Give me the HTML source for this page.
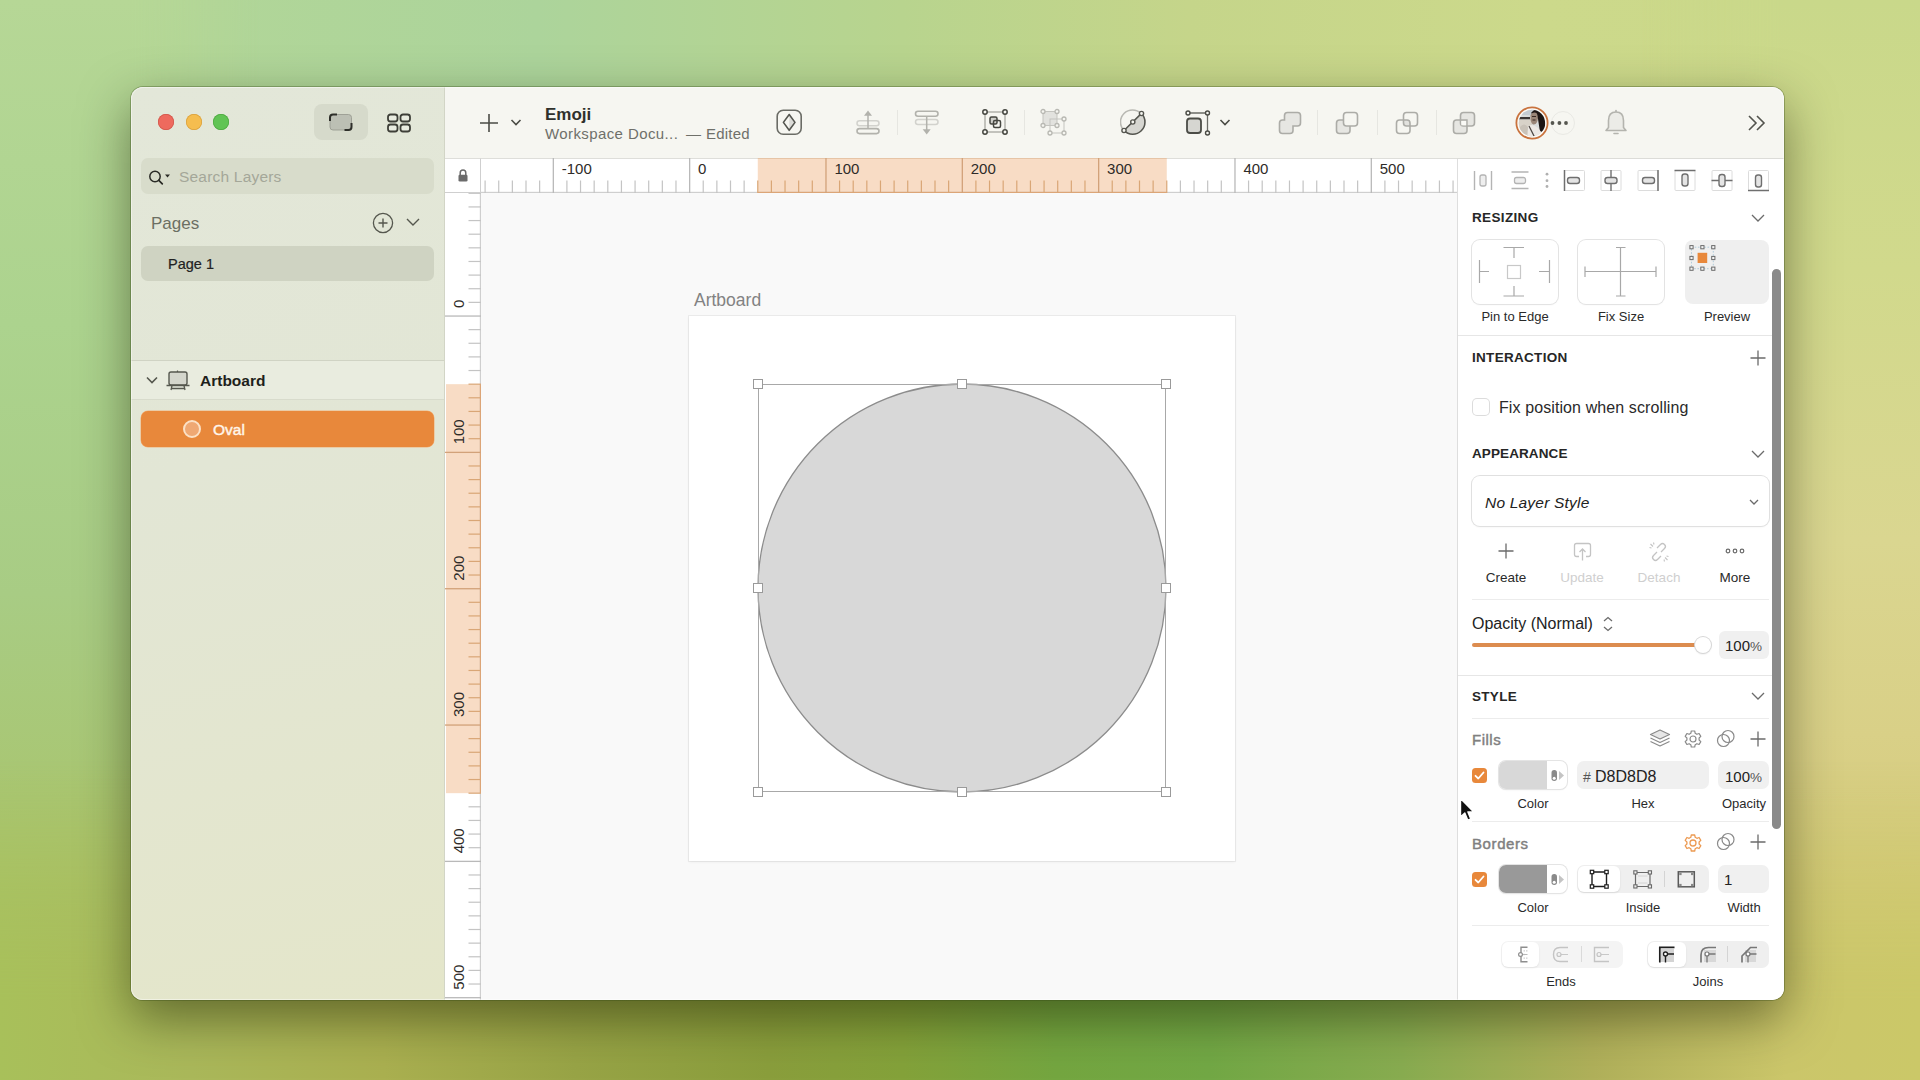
<!DOCTYPE html>
<html><head><meta charset="utf-8">
<style>
*{box-sizing:border-box;margin:0;padding:0}
html,body{width:1920px;height:1080px;overflow:hidden}
body{position:relative;font-family:"Liberation Sans",sans-serif;background:linear-gradient(90deg,#b4d796 0%,#acd49b 28%,#b8d48e 47%,#c5d58a 62%,#ccd98b 80%,#cbd889 100%)}
.bgl{position:absolute;left:0;top:0;width:260px;height:1080px;background:linear-gradient(180deg,#b6d796 0%,#acd38e 30%,#a8cc84 55%,#a9c46c 80%,#a8bd58 100%);-webkit-mask-image:linear-gradient(90deg,#000 0%,#000 50%,transparent 100%)}
.bgr{position:absolute;left:1640px;top:0;width:280px;height:1080px;background:linear-gradient(180deg,#c9d88a 0%,#d1d98c 25%,#dad690 50%,#d9d087 68%,#d5ca7c 82%,#c9c46a 100%);-webkit-mask-image:linear-gradient(90deg,transparent 0%,#000 50%,#000 100%)}
.bgb{position:absolute;left:0;top:760px;width:1920px;height:320px;background:linear-gradient(90deg,#a8c05a 0%,#aab85a 10%,#aab050 20%,#98a446 30%,#8a9e3c 40%,#84a23a 47%,#74a640 55%,#72a845 63%,#88ac50 73%,#b0b05a 83%,#cbc66a 93%,#cbc868 100%);-webkit-mask-image:linear-gradient(180deg,transparent 0%,#000 75%,#000 100%)}
.a{position:absolute}
.win{position:absolute;left:131px;top:87px;width:1653px;height:913px;border-radius:12px;overflow:hidden;
 box-shadow:0 0 0 1px rgba(50,70,20,0.32), 0 18px 50px rgba(25,30,0,0.5);background:#f9f9f9}
.pg{position:absolute;left:-131px;top:-87px;width:1920px;height:1080px}
.t{position:absolute;white-space:nowrap;line-height:1}
</style></head>
<body>
<div class="bgl"></div><div class="bgr"></div><div class="bgb"></div>
<div class="win"><div class="pg">
 <!-- sidebar -->
 <div class="a" style="left:131px;top:87px;width:314px;height:913px;background:linear-gradient(165deg,#e3e7d9 0%,#e2e6d5 40%,#e4e6ca 100%)"></div>
 <div class="a" style="left:444px;top:87px;width:1px;height:913px;background:#d2d5c6"></div>

 <!-- traffic lights -->
 <div class="a" style="left:158px;top:114px;width:16px;height:16px;border-radius:50%;background:#ee6a5e;box-shadow:inset 0 0 0 0.7px #d0564a"></div>
 <div class="a" style="left:186px;top:114px;width:16px;height:16px;border-radius:50%;background:#f5bd4f;box-shadow:inset 0 0 0 0.7px #d9a03c"></div>
 <div class="a" style="left:213px;top:114px;width:16px;height:16px;border-radius:50%;background:#61c454;box-shadow:inset 0 0 0 0.7px #4ea840"></div>
 <!-- view toggle -->
 <div class="a" style="left:314px;top:104px;width:54px;height:36px;border-radius:8px;background:#d6dacb"></div>
 <svg class="a" style="left:326px;top:111px" width="30" height="22" viewBox="0 0 30 22">
  <rect x="4" y="3.5" width="21.5" height="15.5" rx="3" fill="#bcbfb4" stroke="#9a9c92" stroke-width="0.9"/>
  <path d="M4 10 V6.5 Q4 3.5 7 3.5 H11" fill="none" stroke="#2e2f2a" stroke-width="2"/>
  <path d="M25.5 12 V16 Q25.5 19 22.5 19 H18.5" fill="none" stroke="#2e2f2a" stroke-width="2"/>
 </svg>
 <svg class="a" style="left:386px;top:112px" width="26" height="22" viewBox="0 0 26 22">
  <rect x="2" y="2.5" width="9.5" height="7" rx="2.5" fill="#e9ece0" stroke="#3e3f38" stroke-width="1.8"/>
  <rect x="14.5" y="2.5" width="9.5" height="7" rx="2.5" fill="#e9ece0" stroke="#3e3f38" stroke-width="1.8"/>
  <rect x="2" y="12.5" width="9.5" height="7" rx="2.5" fill="#e9ece0" stroke="#3e3f38" stroke-width="1.8"/>
  <rect x="14.5" y="12.5" width="9.5" height="7" rx="2.5" fill="#e9ece0" stroke="#3e3f38" stroke-width="1.8"/>
 </svg>
 <!-- search -->
 <div class="a" style="left:141px;top:158px;width:293px;height:36px;border-radius:7px;background:#d8dccb"></div>
 <svg class="a" style="left:146px;top:167px" width="28" height="20" viewBox="0 0 28 20">
  <circle cx="9" cy="9.5" r="5.2" fill="none" stroke="#2a2b26" stroke-width="1.5"/>
  <path d="M12.8 13.3 L16.3 16.8" stroke="#2a2b26" stroke-width="1.7" stroke-linecap="round"/>
  <path d="M19 7.5 L24 7.5 L21.5 10.5 Z" fill="#2a2b26"/>
 </svg>
 <div class="t" style="left:179px;top:169px;font-size:15.5px;color:#a4a799;letter-spacing:0.2px">Search Layers</div>
 <!-- pages -->
 <div class="t" style="left:151px;top:215px;font-size:17px;color:#6c6f63">Pages</div>
 <svg class="a" style="left:372px;top:212px" width="22" height="22" viewBox="0 0 22 22">
  <circle cx="11" cy="11" r="9.6" fill="none" stroke="#55574e" stroke-width="1.3"/>
  <path d="M11 6.5 V15.5 M6.5 11 H15.5" stroke="#55574e" stroke-width="1.4"/>
 </svg>
 <svg class="a" style="left:405px;top:216px" width="16" height="12" viewBox="0 0 16 12">
  <path d="M2 3 L8 9 L14 3" fill="none" stroke="#55574e" stroke-width="1.4"/>
 </svg>
 <div class="a" style="left:141px;top:246px;width:293px;height:35px;border-radius:7px;background:#cfd3c2"></div>
 <div class="t" style="left:168px;top:257px;font-size:14.5px;color:#222;font-weight:500;-webkit-text-stroke:0.2px #222">Page 1</div>
 <!-- layers -->
 <div class="a" style="left:131px;top:360px;width:313px;height:1px;background:#d0d3c4"></div>
 <div class="a" style="left:131px;top:361px;width:313px;height:38px;background:#e9ecdf"></div>
 <div class="a" style="left:131px;top:399px;width:313px;height:1px;background:#d8dbcc"></div>
 <svg class="a" style="left:144px;top:374px" width="16" height="12" viewBox="0 0 16 12">
  <path d="M3 3.5 L8 8.5 L13 3.5" fill="none" stroke="#55574e" stroke-width="1.6"/>
 </svg>
 <svg class="a" style="left:165px;top:368px" width="26" height="24" viewBox="0 0 26 24">
  <path d="M12.5 2.5 V4" stroke="#56584f" stroke-width="1.2"/>
  <rect x="4" y="4" width="18" height="13" rx="2" fill="#d4d6cc" stroke="#56584f" stroke-width="1.4"/>
  <path d="M1.5 17.5 H24.5" stroke="#56584f" stroke-width="1.5"/>
  <path d="M7 17.5 L6 22 M19 17.5 L20 22 M6.5 20.5 H19.5" stroke="#56584f" stroke-width="1.3"/>
 </svg>
 <div class="t" style="left:200px;top:373px;font-size:15.5px;font-weight:bold;color:#1e1f1b">Artboard</div>
 <div class="a" style="left:141px;top:411px;width:293px;height:36px;border-radius:7px;background:#e8883b;box-shadow:0 0 0 0.5px #f2b27a"></div>
 <div class="a" style="left:183px;top:420px;width:18px;height:18px;border-radius:50%;background:#efa873;border:2px solid #fbe1c6"></div>
 <div class="t" style="left:213px;top:422px;font-size:15.5px;color:#fff5ea;-webkit-text-stroke:0.45px #fff5ea">Oval</div>
 <!-- toolbar -->
 <div class="a" style="left:445px;top:87px;width:1339px;height:71px;background:#f6f6f1"></div>
 <div class="a" style="left:445px;top:158px;width:1339px;height:1px;background:#dcdcd8"></div>

 <!-- toolbar content -->
 <svg class="a" style="left:478px;top:112px" width="22" height="22" viewBox="0 0 22 22">
  <path d="M11 2 V20 M2 11 H20" stroke="#4b4c46" stroke-width="1.6"/>
 </svg>
 <svg class="a" style="left:509px;top:117px" width="14" height="10" viewBox="0 0 14 10">
  <path d="M2.5 3 L7 7.5 L11.5 3" fill="none" stroke="#4b4c46" stroke-width="1.6"/>
 </svg>
 <div class="t" style="left:545px;top:106px;font-size:17px;font-weight:bold;color:#2f302c">Emoji</div>
 <div class="t" style="left:545px;top:126px;font-size:15px;color:#6f706a;letter-spacing:0.4px">Workspace Docu...</div>
 <div class="t" style="left:686px;top:126px;font-size:15px;color:#6f706a">—</div>
 <div class="t" style="left:706px;top:126px;font-size:15px;color:#6f706a;letter-spacing:0.2px">Edited</div>
 <!-- symbol icon -->
 <svg class="a" style="left:770px;top:104px" width="40" height="36" viewBox="770 104 40 36">
  <rect x="777.2" y="110.2" width="24" height="24" rx="6" fill="none" stroke="#6b6c66" stroke-width="1.6"/>
  <path d="M789.2 114.5 L795 122.4 L789.2 130.3 Z" fill="#dcdcd8"/>
  <path d="M789.2 114.5 L795 122.4 L789.2 130.3 L783.4 122.4 Z" fill="none" stroke="#555650" stroke-width="1.6" stroke-linejoin="round"/>
 </svg>
 <!-- forward -->
 <svg class="a" style="left:850px;top:104px" width="36" height="36" viewBox="850 104 36 36">
  <rect x="857" y="120.8" width="22" height="5" rx="2.5" fill="none" stroke="#d2d2cd" stroke-width="1.5"/>
  <rect x="857" y="128.6" width="22" height="5" rx="2.5" fill="none" stroke="#b2b2ac" stroke-width="1.6"/>
  <path d="M868 115 V128.5" stroke="#b2b2ac" stroke-width="1.5"/>
  <path d="M864 115.8 L868 110.5 L872 115.8 Z" fill="#b2b2ac"/>
 </svg>
 <div class="a" style="left:897px;top:110px;width:1px;height:25px;background:#e6e6e1"></div>
 <!-- backward -->
 <svg class="a" style="left:908px;top:104px" width="36" height="36" viewBox="908 104 36 36">
  <rect x="915.5" y="111.3" width="22.5" height="5" rx="2.5" fill="none" stroke="#b2b2ac" stroke-width="1.6"/>
  <rect x="915.5" y="119.6" width="22.5" height="5" rx="2.5" fill="none" stroke="#d2d2cd" stroke-width="1.5"/>
  <path d="M926.7 116.5 V130" stroke="#b2b2ac" stroke-width="1.5"/>
  <path d="M922.7 129.2 L926.7 134.6 L930.7 129.2 Z" fill="#b2b2ac"/>
 </svg>
 <!-- group -->
 <svg class="a" style="left:980px;top:107px" width="30" height="30" viewBox="0 0 30 30">
  <rect x="5" y="5" width="20" height="20" fill="none" stroke="#8e8e88" stroke-width="1"/>
  <circle cx="5" cy="5" r="2.2" fill="#f6f6f1" stroke="#454640" stroke-width="1.5"/>
  <circle cx="25" cy="5" r="2.2" fill="#f6f6f1" stroke="#454640" stroke-width="1.5"/>
  <circle cx="5" cy="25" r="2.2" fill="#f6f6f1" stroke="#454640" stroke-width="1.5"/>
  <circle cx="25" cy="25" r="2.2" fill="#f6f6f1" stroke="#454640" stroke-width="1.5"/>
  <rect x="10" y="10" width="7" height="7" rx="1.5" fill="#cfcfca" stroke="#454640" stroke-width="1.5"/>
  <rect x="13.5" y="13.5" width="7" height="7" rx="1.5" fill="none" stroke="#454640" stroke-width="1.5"/>
 </svg>
 <div class="a" style="left:1024px;top:110px;width:1px;height:25px;background:#e6e6e1"></div>
 <!-- ungroup -->
 <svg class="a" style="left:1039px;top:108px" width="30" height="30" viewBox="0 0 30 30">
  <rect x="4" y="3.5" width="14" height="14" fill="#e2e2de" stroke="#c4c4bf" stroke-width="1"/>
  <rect x="11" y="11" width="14" height="14" fill="none" stroke="#c4c4bf" stroke-width="1"/>
  <g fill="#f6f6f1" stroke="#b8b8b2" stroke-width="1.3">
  <circle cx="4" cy="3.5" r="2"/><circle cx="18" cy="3.5" r="2"/><circle cx="4" cy="17.5" r="2"/><circle cx="18" cy="17.5" r="2"/>
  <circle cx="25" cy="11" r="2"/><circle cx="11" cy="25" r="2"/><circle cx="25" cy="25" r="2"/>
  </g>
 </svg>
 <!-- edit path -->
 <svg class="a" style="left:1120px;top:109px" width="28" height="28" viewBox="0 0 28 28">
  <path d="M4 21.5 A11.5 11.5 0 0 1 21 4.5" fill="none" stroke="#b9b9b3" stroke-width="1.6"/>
  <path d="M4 21.5 L21.5 4.5 A11.5 11.5 0 0 1 4 21.5 Z" fill="#d6d6d1" stroke="#555650" stroke-width="1.6"/>
  <circle cx="4" cy="21.5" r="2.1" fill="#f6f6f1" stroke="#555650" stroke-width="1.4"/>
  <circle cx="12.8" cy="13" r="2.1" fill="#f6f6f1" stroke="#555650" stroke-width="1.4"/>
  <circle cx="21.5" cy="4.5" r="2.1" fill="#f6f6f1" stroke="#555650" stroke-width="1.4"/>
 </svg>
 <!-- scale -->
 <svg class="a" style="left:1184px;top:109px" width="30" height="30" viewBox="0 0 30 30">
  <path d="M4 4 H23.5 V24" fill="none" stroke="#6b6c66" stroke-width="1.3"/>
  <rect x="3" y="9.5" width="14" height="14.5" rx="3" fill="#d6d6d1" stroke="#4b4c46" stroke-width="1.8"/>
  <circle cx="4" cy="4" r="2" fill="#f6f6f1" stroke="#4b4c46" stroke-width="1.4"/>
  <circle cx="23.5" cy="4" r="2" fill="#f6f6f1" stroke="#4b4c46" stroke-width="1.4"/>
  <circle cx="23.5" cy="24" r="2" fill="#f6f6f1" stroke="#4b4c46" stroke-width="1.4"/>
 </svg>
 <svg class="a" style="left:1218px;top:117px" width="14" height="10" viewBox="0 0 14 10">
  <path d="M2.5 3 L7 7.5 L11.5 3" fill="none" stroke="#4b4c46" stroke-width="1.6"/>
 </svg>
 <!-- booleans -->
 <svg class="a" style="left:1276px;top:109px" width="28" height="28" viewBox="0 0 28 28">
  <path d="M11.5 3.5 H21.5 Q24.5 3.5 24.5 6.5 V14 Q24.5 17 21.5 17 H17 V21.5 Q17 24.5 14 24.5 H6.5 Q3.5 24.5 3.5 21.5 V14 Q3.5 11 6.5 11 H8.5 V6.5 Q8.5 3.5 11.5 3.5 Z" fill="#e6e6e2" stroke="#acaca7" stroke-width="1.6"/>
 </svg>
 <div class="a" style="left:1317px;top:110px;width:1px;height:25px;background:#e6e6e1"></div>
 <svg class="a" style="left:1333px;top:109px" width="28" height="28" viewBox="0 0 28 28">
  <rect x="3.5" y="11" width="13.5" height="13.5" rx="3" fill="#e6e6e2" stroke="#acaca7" stroke-width="1.6"/>
  <rect x="10.5" y="3.5" width="14" height="13.5" rx="3" fill="#f6f6f1" stroke="#acaca7" stroke-width="1.6"/>
 </svg>
 <div class="a" style="left:1377px;top:110px;width:1px;height:25px;background:#e6e6e1"></div>
 <svg class="a" style="left:1393px;top:109px" width="28" height="28" viewBox="0 0 28 28">
  <rect x="10.5" y="11" width="6.5" height="6" fill="#e2e2de"/>
  <rect x="3.5" y="11" width="13.5" height="13.5" rx="3" fill="none" stroke="#acaca7" stroke-width="1.6"/>
  <rect x="10.5" y="3.5" width="14" height="13.5" rx="3" fill="none" stroke="#acaca7" stroke-width="1.6"/>
 </svg>
 <div class="a" style="left:1436px;top:110px;width:1px;height:25px;background:#e6e6e1"></div>
 <svg class="a" style="left:1450px;top:109px" width="28" height="28" viewBox="0 0 28 28">
  <rect x="3.5" y="11" width="13.5" height="13.5" rx="3" fill="#e6e6e2" stroke="#acaca7" stroke-width="1.6"/>
  <rect x="10.5" y="3.5" width="14" height="13.5" rx="3" fill="#e6e6e2" stroke="#acaca7" stroke-width="1.6"/>
  <rect x="11.3" y="11.8" width="5" height="4.5" fill="#fafaf6"/>
  <path d="M10.5 11 H17 V17" fill="none" stroke="#acaca7" stroke-width="1.4"/>
 </svg>
 <!-- avatar -->
 <div class="a" style="left:1551px;top:111px;width:24px;height:24px;border-radius:50%;border:1px solid #e9e9e4"></div>
 <svg class="a" style="left:1514px;top:105px" width="36" height="36" viewBox="0 0 36 36">
  <defs><clipPath id="av"><circle cx="18" cy="18" r="13.2"/></clipPath></defs>
  <circle cx="18" cy="18" r="14.8" fill="#fbfaf6"/>
  <g clip-path="url(#av)">
   <rect x="0" y="0" width="36" height="36" fill="#d9dcdc"/>
   <rect x="0" y="3" width="20" height="7" fill="#c4ccd2"/>
   <rect x="0" y="12" width="16" height="2.5" fill="#3a3634"/>
   <rect x="0" y="14.5" width="18" height="22" fill="#d8d2c8"/>
   <path d="M17 8 Q20 3.5 25 5 Q31 8 31 16 L32 26 L26 27 L24 14 Z" fill="#1c1514"/>
   <path d="M16.5 10 Q19 6.5 22.5 8 Q24.5 11 23.5 16 Q22 20 19 19.5 Q16 18 16.5 10 Z" fill="#9a8678"/>
   <path d="M18 11.5 H22 M18.5 15 H21.5" stroke="#3a2a24" stroke-width="1"/>
   <path d="M8 36 Q9 22 17 20 Q26 20 31 36 Z" fill="#ece8e4"/>
   <path d="M6 22 Q10 17 14 22 L13 36 L4 36 Z" fill="#c9c2b8"/>
   <path d="M15 21 L21 33" stroke="#4a4440" stroke-width="1.2"/>
  </g>
  <circle cx="18" cy="18" r="15.6" fill="none" stroke="#c9733e" stroke-width="1.8"/>
 </svg>
 <svg class="a" style="left:1548px;top:119px" width="24" height="8" viewBox="0 0 24 8">
  <circle cx="4.5" cy="4" r="1.9" fill="#55564f"/><circle cx="11.4" cy="4" r="1.9" fill="#55564f"/><circle cx="18" cy="4" r="1.9" fill="#55564f"/>
 </svg>
 <!-- bell -->
 <svg class="a" style="left:1603px;top:108px" width="26" height="28" viewBox="0 0 26 28">
  <path d="M13 2.5 V4" stroke="#b4b4ae" stroke-width="1.6" stroke-linecap="round"/>
  <path d="M5.5 19.5 V12.5 Q5.5 4 13 4 Q20.5 4 20.5 12.5 V19.5 L23 22.5 H3 L5.5 19.5 Z" fill="#ecece7" stroke="#b4b4ae" stroke-width="1.6" stroke-linejoin="round"/>
  <path d="M11 25.5 H15" stroke="#b4b4ae" stroke-width="1.6" stroke-linecap="round"/>
 </svg>
 <!-- >> -->
 <svg class="a" style="left:1746px;top:113px" width="22" height="20" viewBox="0 0 22 20">
  <path d="M3 3 L10 10 L3 17 M11 3 L18 10 L11 17" fill="none" stroke="#52534d" stroke-width="1.6"/>
 </svg>
 <!-- rulers -->
<svg class="a" style="left:481px;top:158px" width="976" height="35" viewBox="0 0 976 35"><rect x="0" y="0" width="976" height="35" fill="#fff"/><rect x="276.77" y="0.5" width="409.00" height="34.5" fill="#f8dcc5"/><rect x="0" y="0" width="976" height="1" fill="#dededa"/><rect x="276.77" y="0" width="409.00" height="1" fill="#e6c4a6"/><rect x="0" y="33.8" width="976" height="1.2" fill="#cfcfcf"/><rect x="276.77" y="33.8" width="409.00" height="1.2" fill="#dca577"/><rect x="3.50" y="22.5" width="1.2" height="12.5" fill="#c4c4c4"/><rect x="17.13" y="22.5" width="1.2" height="12.5" fill="#c4c4c4"/><rect x="30.77" y="22.5" width="1.2" height="12.5" fill="#c4c4c4"/><rect x="44.40" y="22.5" width="1.2" height="12.5" fill="#c4c4c4"/><rect x="58.03" y="22.5" width="1.2" height="12.5" fill="#c4c4c4"/><rect x="71.67" y="0" width="1.3" height="35" fill="#b9b9b9"/><text x="80.77" y="16" font-family="Liberation Sans" font-size="15" fill="#2e2b28">-100</text><rect x="85.30" y="22.5" width="1.2" height="12.5" fill="#c4c4c4"/><rect x="98.93" y="22.5" width="1.2" height="12.5" fill="#c4c4c4"/><rect x="112.57" y="22.5" width="1.2" height="12.5" fill="#c4c4c4"/><rect x="126.20" y="22.5" width="1.2" height="12.5" fill="#c4c4c4"/><rect x="139.83" y="22.5" width="1.2" height="12.5" fill="#c4c4c4"/><rect x="153.47" y="22.5" width="1.2" height="12.5" fill="#c4c4c4"/><rect x="167.10" y="22.5" width="1.2" height="12.5" fill="#c4c4c4"/><rect x="180.73" y="22.5" width="1.2" height="12.5" fill="#c4c4c4"/><rect x="194.37" y="22.5" width="1.2" height="12.5" fill="#c4c4c4"/><rect x="208.00" y="0" width="1.3" height="35" fill="#b9b9b9"/><text x="217.10" y="16" font-family="Liberation Sans" font-size="15" fill="#2e2b28">0</text><rect x="221.63" y="22.5" width="1.2" height="12.5" fill="#c4c4c4"/><rect x="235.27" y="22.5" width="1.2" height="12.5" fill="#c4c4c4"/><rect x="248.90" y="22.5" width="1.2" height="12.5" fill="#c4c4c4"/><rect x="262.53" y="22.5" width="1.2" height="12.5" fill="#c4c4c4"/><rect x="276.17" y="22.5" width="1.2" height="12.5" fill="#d9a676"/><rect x="289.80" y="22.5" width="1.2" height="12.5" fill="#d9a676"/><rect x="303.43" y="22.5" width="1.2" height="12.5" fill="#d9a676"/><rect x="317.07" y="22.5" width="1.2" height="12.5" fill="#d9a676"/><rect x="330.70" y="22.5" width="1.2" height="12.5" fill="#d9a676"/><rect x="344.33" y="0" width="1.3" height="35" fill="#d2a27a"/><text x="353.43" y="16" font-family="Liberation Sans" font-size="15" fill="#2e2b28">100</text><rect x="357.97" y="22.5" width="1.2" height="12.5" fill="#d9a676"/><rect x="371.60" y="22.5" width="1.2" height="12.5" fill="#d9a676"/><rect x="385.23" y="22.5" width="1.2" height="12.5" fill="#d9a676"/><rect x="398.87" y="22.5" width="1.2" height="12.5" fill="#d9a676"/><rect x="412.50" y="22.5" width="1.2" height="12.5" fill="#d9a676"/><rect x="426.13" y="22.5" width="1.2" height="12.5" fill="#d9a676"/><rect x="439.77" y="22.5" width="1.2" height="12.5" fill="#d9a676"/><rect x="453.40" y="22.5" width="1.2" height="12.5" fill="#d9a676"/><rect x="467.03" y="22.5" width="1.2" height="12.5" fill="#d9a676"/><rect x="480.67" y="0" width="1.3" height="35" fill="#d2a27a"/><text x="489.77" y="16" font-family="Liberation Sans" font-size="15" fill="#2e2b28">200</text><rect x="494.30" y="22.5" width="1.2" height="12.5" fill="#d9a676"/><rect x="507.93" y="22.5" width="1.2" height="12.5" fill="#d9a676"/><rect x="521.57" y="22.5" width="1.2" height="12.5" fill="#d9a676"/><rect x="535.20" y="22.5" width="1.2" height="12.5" fill="#d9a676"/><rect x="548.83" y="22.5" width="1.2" height="12.5" fill="#d9a676"/><rect x="562.47" y="22.5" width="1.2" height="12.5" fill="#d9a676"/><rect x="576.10" y="22.5" width="1.2" height="12.5" fill="#d9a676"/><rect x="589.73" y="22.5" width="1.2" height="12.5" fill="#d9a676"/><rect x="603.37" y="22.5" width="1.2" height="12.5" fill="#d9a676"/><rect x="617.00" y="0" width="1.3" height="35" fill="#d2a27a"/><text x="626.10" y="16" font-family="Liberation Sans" font-size="15" fill="#2e2b28">300</text><rect x="630.63" y="22.5" width="1.2" height="12.5" fill="#d9a676"/><rect x="644.27" y="22.5" width="1.2" height="12.5" fill="#d9a676"/><rect x="657.90" y="22.5" width="1.2" height="12.5" fill="#d9a676"/><rect x="671.53" y="22.5" width="1.2" height="12.5" fill="#d9a676"/><rect x="685.17" y="22.5" width="1.2" height="12.5" fill="#d9a676"/><rect x="698.80" y="22.5" width="1.2" height="12.5" fill="#c4c4c4"/><rect x="712.43" y="22.5" width="1.2" height="12.5" fill="#c4c4c4"/><rect x="726.07" y="22.5" width="1.2" height="12.5" fill="#c4c4c4"/><rect x="739.70" y="22.5" width="1.2" height="12.5" fill="#c4c4c4"/><rect x="753.33" y="0" width="1.3" height="35" fill="#b9b9b9"/><text x="762.43" y="16" font-family="Liberation Sans" font-size="15" fill="#2e2b28">400</text><rect x="766.97" y="22.5" width="1.2" height="12.5" fill="#c4c4c4"/><rect x="780.60" y="22.5" width="1.2" height="12.5" fill="#c4c4c4"/><rect x="794.23" y="22.5" width="1.2" height="12.5" fill="#c4c4c4"/><rect x="807.87" y="22.5" width="1.2" height="12.5" fill="#c4c4c4"/><rect x="821.50" y="22.5" width="1.2" height="12.5" fill="#c4c4c4"/><rect x="835.13" y="22.5" width="1.2" height="12.5" fill="#c4c4c4"/><rect x="848.77" y="22.5" width="1.2" height="12.5" fill="#c4c4c4"/><rect x="862.40" y="22.5" width="1.2" height="12.5" fill="#c4c4c4"/><rect x="876.03" y="22.5" width="1.2" height="12.5" fill="#c4c4c4"/><rect x="889.66" y="0" width="1.3" height="35" fill="#b9b9b9"/><text x="898.76" y="16" font-family="Liberation Sans" font-size="15" fill="#2e2b28">500</text><rect x="903.30" y="22.5" width="1.2" height="12.5" fill="#c4c4c4"/><rect x="916.93" y="22.5" width="1.2" height="12.5" fill="#c4c4c4"/><rect x="930.56" y="22.5" width="1.2" height="12.5" fill="#c4c4c4"/><rect x="944.20" y="22.5" width="1.2" height="12.5" fill="#c4c4c4"/><rect x="957.83" y="22.5" width="1.2" height="12.5" fill="#c4c4c4"/><rect x="971.46" y="22.5" width="1.2" height="12.5" fill="#c4c4c4"/></svg>
<svg class="a" style="left:445px;top:192px" width="36" height="808" viewBox="0 0 36 808"><rect x="0" y="0" width="36" height="808" fill="#fff"/><rect x="1" y="192.17" width="35" height="409.00" fill="#f8dcc5"/><rect x="34.8" y="0" width="1.2" height="808" fill="#cfcfcf"/><rect x="34.8" y="192.17" width="1.2" height="409.00" fill="#dca577"/><rect x="23.5" y="0.70" width="12.5" height="1.2" fill="#c4c4c4"/><rect x="23.5" y="14.33" width="12.5" height="1.2" fill="#c4c4c4"/><rect x="23.5" y="27.97" width="12.5" height="1.2" fill="#c4c4c4"/><rect x="23.5" y="41.60" width="12.5" height="1.2" fill="#c4c4c4"/><rect x="23.5" y="55.23" width="12.5" height="1.2" fill="#c4c4c4"/><rect x="23.5" y="68.87" width="12.5" height="1.2" fill="#c4c4c4"/><rect x="23.5" y="82.50" width="12.5" height="1.2" fill="#c4c4c4"/><rect x="23.5" y="96.13" width="12.5" height="1.2" fill="#c4c4c4"/><rect x="23.5" y="109.77" width="12.5" height="1.2" fill="#c4c4c4"/><rect x="0" y="123.40" width="36" height="1.3" fill="#b9b9b9"/><text transform="translate(18.5 116.00) rotate(-90)" x="0" y="0" font-family="Liberation Sans" font-size="15" fill="#2e2b28">0</text><rect x="23.5" y="137.03" width="12.5" height="1.2" fill="#c4c4c4"/><rect x="23.5" y="150.67" width="12.5" height="1.2" fill="#c4c4c4"/><rect x="23.5" y="164.30" width="12.5" height="1.2" fill="#c4c4c4"/><rect x="23.5" y="177.93" width="12.5" height="1.2" fill="#c4c4c4"/><rect x="23.5" y="191.57" width="12.5" height="1.2" fill="#d9a676"/><rect x="23.5" y="205.20" width="12.5" height="1.2" fill="#d9a676"/><rect x="23.5" y="218.83" width="12.5" height="1.2" fill="#d9a676"/><rect x="23.5" y="232.47" width="12.5" height="1.2" fill="#d9a676"/><rect x="23.5" y="246.10" width="12.5" height="1.2" fill="#d9a676"/><rect x="0" y="259.73" width="36" height="1.3" fill="#d2a27a"/><text transform="translate(18.5 252.33) rotate(-90)" x="0" y="0" font-family="Liberation Sans" font-size="15" fill="#2e2b28">100</text><rect x="23.5" y="273.37" width="12.5" height="1.2" fill="#d9a676"/><rect x="23.5" y="287.00" width="12.5" height="1.2" fill="#d9a676"/><rect x="23.5" y="300.63" width="12.5" height="1.2" fill="#d9a676"/><rect x="23.5" y="314.27" width="12.5" height="1.2" fill="#d9a676"/><rect x="23.5" y="327.90" width="12.5" height="1.2" fill="#d9a676"/><rect x="23.5" y="341.53" width="12.5" height="1.2" fill="#d9a676"/><rect x="23.5" y="355.17" width="12.5" height="1.2" fill="#d9a676"/><rect x="23.5" y="368.80" width="12.5" height="1.2" fill="#d9a676"/><rect x="23.5" y="382.43" width="12.5" height="1.2" fill="#d9a676"/><rect x="0" y="396.07" width="36" height="1.3" fill="#d2a27a"/><text transform="translate(18.5 388.67) rotate(-90)" x="0" y="0" font-family="Liberation Sans" font-size="15" fill="#2e2b28">200</text><rect x="23.5" y="409.70" width="12.5" height="1.2" fill="#d9a676"/><rect x="23.5" y="423.33" width="12.5" height="1.2" fill="#d9a676"/><rect x="23.5" y="436.97" width="12.5" height="1.2" fill="#d9a676"/><rect x="23.5" y="450.60" width="12.5" height="1.2" fill="#d9a676"/><rect x="23.5" y="464.23" width="12.5" height="1.2" fill="#d9a676"/><rect x="23.5" y="477.87" width="12.5" height="1.2" fill="#d9a676"/><rect x="23.5" y="491.50" width="12.5" height="1.2" fill="#d9a676"/><rect x="23.5" y="505.13" width="12.5" height="1.2" fill="#d9a676"/><rect x="23.5" y="518.77" width="12.5" height="1.2" fill="#d9a676"/><rect x="0" y="532.40" width="36" height="1.3" fill="#d2a27a"/><text transform="translate(18.5 525.00) rotate(-90)" x="0" y="0" font-family="Liberation Sans" font-size="15" fill="#2e2b28">300</text><rect x="23.5" y="546.03" width="12.5" height="1.2" fill="#d9a676"/><rect x="23.5" y="559.67" width="12.5" height="1.2" fill="#d9a676"/><rect x="23.5" y="573.30" width="12.5" height="1.2" fill="#d9a676"/><rect x="23.5" y="586.93" width="12.5" height="1.2" fill="#d9a676"/><rect x="23.5" y="600.57" width="12.5" height="1.2" fill="#d9a676"/><rect x="23.5" y="614.20" width="12.5" height="1.2" fill="#c4c4c4"/><rect x="23.5" y="627.83" width="12.5" height="1.2" fill="#c4c4c4"/><rect x="23.5" y="641.47" width="12.5" height="1.2" fill="#c4c4c4"/><rect x="23.5" y="655.10" width="12.5" height="1.2" fill="#c4c4c4"/><rect x="0" y="668.73" width="36" height="1.3" fill="#b9b9b9"/><text transform="translate(18.5 661.33) rotate(-90)" x="0" y="0" font-family="Liberation Sans" font-size="15" fill="#2e2b28">400</text><rect x="23.5" y="682.37" width="12.5" height="1.2" fill="#c4c4c4"/><rect x="23.5" y="696.00" width="12.5" height="1.2" fill="#c4c4c4"/><rect x="23.5" y="709.63" width="12.5" height="1.2" fill="#c4c4c4"/><rect x="23.5" y="723.27" width="12.5" height="1.2" fill="#c4c4c4"/><rect x="23.5" y="736.90" width="12.5" height="1.2" fill="#c4c4c4"/><rect x="23.5" y="750.53" width="12.5" height="1.2" fill="#c4c4c4"/><rect x="23.5" y="764.17" width="12.5" height="1.2" fill="#c4c4c4"/><rect x="23.5" y="777.80" width="12.5" height="1.2" fill="#c4c4c4"/><rect x="23.5" y="791.43" width="12.5" height="1.2" fill="#c4c4c4"/><rect x="0" y="805.06" width="36" height="1.3" fill="#b9b9b9"/><text transform="translate(18.5 797.66) rotate(-90)" x="0" y="0" font-family="Liberation Sans" font-size="15" fill="#2e2b28">500</text></svg>
<div class="a" style="left:445px;top:158px;width:36px;height:35px;background:#fff;border-top:1px solid #dededa;border-bottom:1.2px solid #cfcfcf;border-right:1.2px solid #cfcfcf"></div>
<svg class="a" style="left:456px;top:168px" width="14" height="16" viewBox="0 0 14 16"><path d="M4.2 7 V5 Q4.2 2 7 2 Q9.8 2 9.8 5 V7" fill="none" stroke="#6b6b6b" stroke-width="1.5"/><rect x="2.5" y="6.8" width="9" height="6.8" rx="1.3" fill="#6b6b6b"/></svg>
 <!-- canvas -->
 <div class="t" style="left:694px;top:292px;font-size:17.5px;color:#828282">Artboard</div>
 <div class="a" style="left:689px;top:316px;width:546px;height:545px;background:#fff;box-shadow:0 0 0 1px rgba(0,0,0,0.05),0 1px 3px rgba(0,0,0,0.06)"></div>
 <svg class="a" style="left:740px;top:366px" width="444" height="444" viewBox="0 0 444 444">
  <circle cx="222" cy="222" r="204" fill="#d8d8d8" stroke="#8c8c8c" stroke-width="1.3"/>
  <rect x="18.5" y="18.5" width="407" height="407" fill="none" stroke="#a8a8a8" stroke-width="1"/>
  <g fill="#fff" stroke="#9a9a9a" stroke-width="1">
   <rect x="13.5" y="13.5" width="9" height="9"/><rect x="217.5" y="13.5" width="9" height="9"/><rect x="421.5" y="13.5" width="9" height="9"/>
   <rect x="13.5" y="217.5" width="9" height="9"/><rect x="421.5" y="217.5" width="9" height="9"/>
   <rect x="13.5" y="421.5" width="9" height="9"/><rect x="217.5" y="421.5" width="9" height="9"/><rect x="421.5" y="421.5" width="9" height="9"/>
  </g>
 </svg>

 <!-- inspector -->
 <div class="a" style="left:1457px;top:159px;width:327px;height:841px;background:#fff"></div>
 <div class="a" style="left:1457px;top:159px;width:1px;height:841px;background:#dedede"></div>
 <!-- inspector content -->
 <!-- align row -->
 <svg class="a" style="left:1470px;top:166px" width="300" height="30" viewBox="1470 166 300 30">
  <g fill="none" stroke-width="1.4">
   <path d="M1474.5 171 V190 M1491.5 171 V190" stroke="#b4b4b4"/>
   <rect x="1480" y="175" width="6" height="11" rx="2" fill="#eee" stroke="#b4b4b4" stroke-width="1.3"/>
   <path d="M1511.5 172 H1528.5 M1511.5 188.5 H1528.5" stroke="#b4b4b4"/>
   <rect x="1514.5" y="177.5" width="11" height="6" rx="2" fill="#eee" stroke="#b4b4b4" stroke-width="1.3"/>
  </g>
  <g fill="#b0b0b0"><circle cx="1547" cy="174.2" r="1.4"/><circle cx="1547" cy="180.7" r="1.4"/><circle cx="1547" cy="186.5" r="1.4"/></g>
  <g fill="none">
   <rect x="1564.5" y="170.5" width="20" height="20" rx="1" stroke="#dcdcdc" stroke-width="1"/>
   <path d="M1564.5 170 V191" stroke="#6f6f6f" stroke-width="1.5"/>
   <rect x="1567.5" y="177.5" width="12" height="6" rx="2.5" fill="#e4e4e4" stroke="#6f6f6f" stroke-width="1.4"/>
   <rect x="1601" y="170.5" width="20" height="20" rx="1" stroke="#dcdcdc" stroke-width="1"/>
   <path d="M1611 170 V191" stroke="#6f6f6f" stroke-width="1.4"/>
   <rect x="1605" y="177.5" width="12" height="6" rx="2.5" fill="#e4e4e4" stroke="#6f6f6f" stroke-width="1.4"/>
   <rect x="1638" y="170.5" width="20" height="20" rx="1" stroke="#dcdcdc" stroke-width="1"/>
   <path d="M1658 170 V191" stroke="#6f6f6f" stroke-width="1.5"/>
   <rect x="1642.5" y="177.5" width="12" height="6" rx="2.5" fill="#e4e4e4" stroke="#6f6f6f" stroke-width="1.4"/>
   <rect x="1675" y="170.5" width="20" height="20" rx="1" stroke="#dcdcdc" stroke-width="1"/>
   <path d="M1674.5 170.5 H1695.5" stroke="#6f6f6f" stroke-width="1.5"/>
   <rect x="1682" y="174" width="6" height="12" rx="2.5" fill="#e4e4e4" stroke="#6f6f6f" stroke-width="1.4"/>
   <rect x="1712" y="170.5" width="20" height="20" rx="1" stroke="#dcdcdc" stroke-width="1"/>
   <path d="M1711.5 180.5 H1732.5" stroke="#6f6f6f" stroke-width="1.4"/>
   <rect x="1719" y="174.5" width="6" height="12" rx="2.5" fill="#e4e4e4" stroke="#6f6f6f" stroke-width="1.4"/>
   <rect x="1748.5" y="170.5" width="20" height="20" rx="1" stroke="#dcdcdc" stroke-width="1"/>
   <path d="M1748 190.5 H1769" stroke="#6f6f6f" stroke-width="1.5"/>
   <rect x="1755.5" y="175" width="6" height="12" rx="2.5" fill="#e4e4e4" stroke="#6f6f6f" stroke-width="1.4"/>
  </g>
 </svg>
 <!-- RESIZING -->
 <div class="t" style="left:1472px;top:211px;font-size:13.5px;font-weight:bold;color:#262626;letter-spacing:0.35px">RESIZING</div>
 <svg class="a" style="left:1750px;top:212px" width="16" height="12" viewBox="0 0 16 12"><path d="M2 3 L8 9 L14 3" fill="none" stroke="#6b6b6b" stroke-width="1.3"/></svg>
 <div class="a" style="left:1472px;top:240px;width:86px;height:64px;border-radius:8px;background:#fff;box-shadow:0 0 0 1px #e3e3e3,0 1px 2px rgba(0,0,0,0.06)"></div>
 <div class="a" style="left:1578px;top:240px;width:86px;height:64px;border-radius:8px;background:#fff;box-shadow:0 0 0 1px #e3e3e3,0 1px 2px rgba(0,0,0,0.06)"></div>
 <div class="a" style="left:1685px;top:240px;width:84px;height:64px;border-radius:8px;background:#efefef"></div>
 <svg class="a" style="left:1472px;top:240px" width="86" height="64" viewBox="0 0 86 64">
  <g stroke="#a8a8a8" stroke-width="1.2" fill="none">
   <path d="M31.5 7.5 H52 M42 7.5 V18"/>
   <path d="M31.5 56 H52 M42 46 V56"/>
   <path d="M7.5 20 V43 M7.5 31.5 H17"/>
   <path d="M77.5 20 V43 M67 31.5 H77.5"/>
   <rect x="35.5" y="25.5" width="13" height="13" stroke="#c8c8c8"/>
  </g>
 </svg>
 <svg class="a" style="left:1578px;top:240px" width="86" height="64" viewBox="0 0 86 64">
  <g stroke="#a8a8a8" stroke-width="1.2" fill="none">
   <path d="M42.5 7.5 V56 M38 7.5 H47.5 M38 56 H47.5"/>
   <path d="M7 31.5 H78 M7 26.5 V37 M78 26.5 V37"/>
  </g>
 </svg>
 <svg class="a" style="left:1685px;top:240px" width="40" height="36" viewBox="0 0 40 36">
  <path d="M6.5 7.2 H28.3 V28.7 H6.5 Z" fill="none" stroke="#9fc3d6" stroke-width="0.8" stroke-dasharray="1.6 1.6"/>
  <rect x="12.6" y="12.8" width="9.6" height="10.2" fill="#e8883b"/>
  <g fill="#f4f4f4" stroke="#6a6a6a" stroke-width="1">
   <rect x="4.9" y="5.6" width="3.2" height="3.2"/><rect x="15.8" y="5.6" width="3.2" height="3.2"/><rect x="26.7" y="5.6" width="3.2" height="3.2"/>
   <rect x="4.9" y="16.4" width="3.2" height="3.2"/><rect x="26.7" y="16.4" width="3.2" height="3.2"/>
   <rect x="4.9" y="27.1" width="3.2" height="3.2"/><rect x="15.8" y="27.1" width="3.2" height="3.2"/><rect x="26.7" y="27.1" width="3.2" height="3.2"/>
  </g>
 </svg>
 <div class="t" style="left:1472px;top:310px;width:86px;text-align:center;font-size:13px;color:#2a2a2a">Pin to Edge</div>
 <div class="t" style="left:1578px;top:310px;width:86px;text-align:center;font-size:13px;color:#2a2a2a">Fix Size</div>
 <div class="t" style="left:1685px;top:310px;width:84px;text-align:center;font-size:13px;color:#2a2a2a">Preview</div>
 <div class="a" style="left:1458px;top:335px;width:314px;height:1px;background:#e6e6e6"></div>
 <!-- INTERACTION -->
 <div class="t" style="left:1472px;top:351px;font-size:13.5px;font-weight:bold;color:#262626;letter-spacing:0.3px">INTERACTION</div>
 <svg class="a" style="left:1749px;top:349px" width="18" height="18" viewBox="0 0 18 18"><path d="M9 1.5 V16.5 M1.5 9 H16.5" stroke="#6b6b6b" stroke-width="1.3"/></svg>
 <div class="a" style="left:1473px;top:399px;width:16px;height:16px;border-radius:4px;background:#fff;box-shadow:0 0 0 1px #dcdcdc"></div>
 <div class="t" style="left:1499px;top:400px;font-size:16px;letter-spacing:0.1px;color:#2a2a2a">Fix position when scrolling</div>
 <!-- APPEARANCE -->
 <div class="t" style="left:1472px;top:447px;font-size:13.5px;font-weight:bold;color:#262626;letter-spacing:0.1px">APPEARANCE</div>
 <svg class="a" style="left:1750px;top:448px" width="16" height="12" viewBox="0 0 16 12"><path d="M2 3 L8 9 L14 3" fill="none" stroke="#6b6b6b" stroke-width="1.3"/></svg>
 <div class="a" style="left:1472px;top:476px;width:297px;height:50px;border-radius:8px;background:#fff;box-shadow:0 0 0 1px #e0e0e0,0 1px 2px rgba(0,0,0,0.08)"></div>
 <div class="t" style="left:1485px;top:495px;font-size:15.5px;font-style:italic;letter-spacing:0.2px;color:#222">No Layer Style</div>
 <svg class="a" style="left:1748px;top:497px" width="12" height="10" viewBox="0 0 12 10"><path d="M2 3 L6 7 L10 3" fill="none" stroke="#6b6b6b" stroke-width="1.3"/></svg>
 <svg class="a" style="left:1496px;top:541px" width="20" height="20" viewBox="0 0 20 20"><path d="M10 2.5 V17.5 M2.5 10 H17.5" stroke="#6b6b6b" stroke-width="1.3"/></svg>
 <svg class="a" style="left:1572px;top:541px" width="22" height="22" viewBox="0 0 22 22">
  <path d="M7 15.5 H4.5 Q2.5 15.5 2.5 13.5 V4.5 Q2.5 2.5 4.5 2.5 H16.5 Q18.5 2.5 18.5 4.5 V13.5 Q18.5 15.5 16.5 15.5 H14" fill="none" stroke="#c4c4c4" stroke-width="1.3"/>
  <path d="M10.5 19.5 V8 M7.5 11 L10.5 8 L13.5 11" fill="none" stroke="#c4c4c4" stroke-width="1.3"/>
 </svg>
 <svg class="a" style="left:1648px;top:541px" width="22" height="22" viewBox="0 0 22 22">
  <path d="M9 7 L12.5 3.5 Q14.5 1.5 16.5 3.5 Q18.5 5.5 16.5 7.5 L13 11" fill="none" stroke="#c4c4c4" stroke-width="1.3"/>
  <path d="M9 11 L5.5 14.5 Q3.5 16.5 5.5 18.5 Q7.5 20.5 9.5 18.5 L13 15" fill="none" stroke="#c4c4c4" stroke-width="1.3"/>
  <path d="M2.5 3 L5 5.5 M5.5 1.5 L6 3.5 M1.5 6.5 L3.5 7 M19.5 19 L17 16.5 M16.5 20.5 L16 18.5 M20.5 15.5 L18.5 15" stroke="#c4c4c4" stroke-width="1.1"/>
 </svg>
 <svg class="a" style="left:1724px;top:545px" width="22" height="12" viewBox="0 0 22 12"><g fill="none" stroke="#6b6b6b" stroke-width="1.2"><circle cx="4" cy="6" r="1.8"/><circle cx="11" cy="6" r="1.8"/><circle cx="18" cy="6" r="1.8"/></g></svg>
 <div class="t" style="left:1466px;top:571px;width:80px;text-align:center;font-size:13.5px;color:#2a2a2a">Create</div>
 <div class="t" style="left:1542px;top:571px;width:80px;text-align:center;font-size:13.5px;color:#cfcfcf">Update</div>
 <div class="t" style="left:1619px;top:571px;width:80px;text-align:center;font-size:13.5px;color:#cfcfcf">Detach</div>
 <div class="t" style="left:1695px;top:571px;width:80px;text-align:center;font-size:13.5px;color:#2a2a2a">More</div>
 <div class="a" style="left:1472px;top:599px;width:297px;height:1px;background:#ececec"></div>
 <!-- opacity -->
 <div class="t" style="left:1472px;top:616px;font-size:16px;color:#222">Opacity (Normal)</div>
 <svg class="a" style="left:1601px;top:615px" width="14" height="18" viewBox="0 0 14 18"><path d="M3 6 L7 2.5 L11 6 M3 12 L7 15.5 L11 12" fill="none" stroke="#6b6b6b" stroke-width="1.3"/></svg>
 <div class="a" style="left:1472px;top:643px;width:234px;height:4px;border-radius:2px;background:#dc8c4f"></div>
 <div class="a" style="left:1695px;top:637px;width:16px;height:16px;border-radius:50%;background:#fff;box-shadow:0 0 0 1px #d6d6d6,0 1px 2px rgba(0,0,0,0.15)"></div>
 <div class="a" style="left:1719px;top:631px;width:50px;height:28px;border-radius:6px;background:#f0f0f0"></div>
 <div class="t" style="left:1725px;top:638px;font-size:15px;color:#222">100<span style="font-size:13.5px;color:#555">%</span></div>
 <div class="a" style="left:1458px;top:675px;width:314px;height:1px;background:#e6e6e6"></div>
 <!-- STYLE -->
 <div class="t" style="left:1472px;top:690px;font-size:13.5px;font-weight:bold;color:#262626;letter-spacing:0.3px">STYLE</div>
 <svg class="a" style="left:1750px;top:690px" width="16" height="12" viewBox="0 0 16 12"><path d="M2 3 L8 9 L14 3" fill="none" stroke="#6b6b6b" stroke-width="1.3"/></svg>
 <div class="a" style="left:1472px;top:718px;width:297px;height:1px;background:#ececec"></div>
 <!-- Fills -->
 <div class="t" style="left:1472px;top:732px;font-size:15px;color:#808080;-webkit-text-stroke:0.45px #808080;letter-spacing:0.5px">Fills</div>
 <svg class="a" style="left:1648px;top:728px" width="24" height="21" viewBox="0 0 24 21">
  <path d="M12 2 L21.5 6.5 L12 11 L2.5 6.5 Z" fill="#e6e6e6" stroke="#8a8a8a" stroke-width="1.2" stroke-linejoin="round"/>
  <path d="M2.5 10 L12 14.5 L21.5 10 M2.5 13.5 L12 18 L21.5 13.5" fill="none" stroke="#8a8a8a" stroke-width="1.2" stroke-linejoin="round"/>
 </svg>
 <svg class="a" style="left:1683px;top:729px" width="20" height="20" viewBox="0 0 20 20">
  <path d="M8.3 2 H11.7 L12.2 4.3 L13.9 5.3 L16.1 4.5 L17.8 7.4 L16.1 9 V11 L17.8 12.6 L16.1 15.5 L13.9 14.7 L12.2 15.7 L11.7 18 H8.3 L7.8 15.7 L6.1 14.7 L3.9 15.5 L2.2 12.6 L3.9 11 V9 L2.2 7.4 L3.9 4.5 L6.1 5.3 L7.8 4.3 Z" fill="none" stroke="#8a8a8a" stroke-width="1.2" stroke-linejoin="round"/>
  <circle cx="10" cy="10" r="3" fill="none" stroke="#8a8a8a" stroke-width="1.2"/>
 </svg>
 <svg class="a" style="left:1716px;top:729px" width="20" height="20" viewBox="0 0 20 20">
  <circle cx="7.5" cy="11.5" r="6" fill="none" stroke="#8a8a8a" stroke-width="1.2"/>
  <circle cx="12" cy="7.5" r="6" fill="none" stroke="#8a8a8a" stroke-width="1.2"/>
 </svg>
 <svg class="a" style="left:1749px;top:730px" width="18" height="18" viewBox="0 0 18 18"><path d="M9 1.5 V16.5 M1.5 9 H16.5" stroke="#6b6b6b" stroke-width="1.3"/></svg>
 <!-- fill row -->
 <div class="a" style="left:1472px;top:768px;width:15px;height:15px;border-radius:3.5px;background:#e8883b"></div>
 <svg class="a" style="left:1472px;top:768px" width="15" height="15" viewBox="0 0 15 15"><path d="M3.5 7.8 L6.3 10.5 L11.5 4.5" fill="none" stroke="#fff" stroke-width="1.8" stroke-linecap="round" stroke-linejoin="round"/></svg>
 <div class="a" style="left:1499px;top:761px;width:68px;height:28px;border-radius:7px;background:#fff;box-shadow:0 0 0 1px #e4e4e4,0 1px 2px rgba(0,0,0,0.08);overflow:hidden">
  <div class="a" style="left:0;top:0;width:48px;height:28px;background:#d8d8d8"></div>
 </div>
 <svg class="a" style="left:1550px;top:768px" width="16" height="15" viewBox="0 0 16 15"><rect x="1.5" y="2" width="5.5" height="11" rx="2.7" fill="#8a8a8a"/><path d="M9 3 L14 7.5 L9 12 Z" fill="#c4c4c4"/><circle cx="4.2" cy="10.3" r="1.5" fill="#fff"/></svg>
 <div class="a" style="left:1577px;top:761px;width:132px;height:28px;border-radius:7px;background:#f0f0f0"></div>
 <div class="t" style="left:1583px;top:770px;font-size:14px;color:#555">#</div>
 <div class="t" style="left:1595px;top:769px;font-size:16px;color:#222">D8D8D8</div>
 <div class="a" style="left:1718px;top:761px;width:51px;height:28px;border-radius:7px;background:#f0f0f0"></div>
 <div class="t" style="left:1725px;top:769px;font-size:15px;color:#222">100<span style="font-size:13.5px;color:#555">%</span></div>
 <div class="t" style="left:1499px;top:797px;width:68px;text-align:center;font-size:13px;color:#2a2a2a">Color</div>
 <div class="t" style="left:1577px;top:797px;width:132px;text-align:center;font-size:13px;color:#2a2a2a">Hex</div>
 <div class="t" style="left:1712px;top:797px;width:64px;text-align:center;font-size:13px;color:#2a2a2a">Opacity</div>
 <div class="a" style="left:1472px;top:821px;width:297px;height:1px;background:#ececec"></div>
 <!-- Borders -->
 <div class="t" style="left:1472px;top:836px;font-size:15px;color:#808080;-webkit-text-stroke:0.45px #808080;letter-spacing:0.6px">Borders</div>
 <svg class="a" style="left:1683px;top:833px" width="20" height="20" viewBox="0 0 20 20">
  <path d="M8.3 2 H11.7 L12.2 4.3 L13.9 5.3 L16.1 4.5 L17.8 7.4 L16.1 9 V11 L17.8 12.6 L16.1 15.5 L13.9 14.7 L12.2 15.7 L11.7 18 H8.3 L7.8 15.7 L6.1 14.7 L3.9 15.5 L2.2 12.6 L3.9 11 V9 L2.2 7.4 L3.9 4.5 L6.1 5.3 L7.8 4.3 Z" fill="none" stroke="#ec9a52" stroke-width="1.3" stroke-linejoin="round"/>
  <circle cx="10" cy="10" r="3" fill="none" stroke="#ec9a52" stroke-width="1.3"/>
 </svg>
 <svg class="a" style="left:1716px;top:832px" width="20" height="20" viewBox="0 0 20 20">
  <circle cx="7.5" cy="11.5" r="6" fill="none" stroke="#8a8a8a" stroke-width="1.2"/>
  <circle cx="12" cy="7.5" r="6" fill="none" stroke="#8a8a8a" stroke-width="1.2"/>
 </svg>
 <svg class="a" style="left:1749px;top:833px" width="18" height="18" viewBox="0 0 18 18"><path d="M9 1.5 V16.5 M1.5 9 H16.5" stroke="#6b6b6b" stroke-width="1.3"/></svg>
 <div class="a" style="left:1472px;top:872px;width:15px;height:15px;border-radius:3.5px;background:#e8883b"></div>
 <svg class="a" style="left:1472px;top:872px" width="15" height="15" viewBox="0 0 15 15"><path d="M3.5 7.8 L6.3 10.5 L11.5 4.5" fill="none" stroke="#fff" stroke-width="1.8" stroke-linecap="round" stroke-linejoin="round"/></svg>
 <div class="a" style="left:1499px;top:865px;width:68px;height:28px;border-radius:7px;background:#fff;box-shadow:0 0 0 1px #e4e4e4,0 1px 2px rgba(0,0,0,0.08);overflow:hidden">
  <div class="a" style="left:0;top:0;width:48px;height:28px;background:#999"></div>
 </div>
 <svg class="a" style="left:1550px;top:872px" width="16" height="15" viewBox="0 0 16 15"><rect x="1.5" y="2" width="5.5" height="11" rx="2.7" fill="#8a8a8a"/><path d="M9 3 L14 7.5 L9 12 Z" fill="#c4c4c4"/><circle cx="4.2" cy="10.3" r="1.5" fill="#fff"/></svg>
 <div class="a" style="left:1577px;top:865px;width:132px;height:28px;border-radius:7px;background:#efefef"></div>
 <div class="a" style="left:1578px;top:866px;width:42px;height:26px;border-radius:6px;background:#fff;box-shadow:0 1px 2px rgba(0,0,0,0.1)"></div>
 <div class="a" style="left:1664px;top:871px;width:1px;height:16px;background:#d4d4d4"></div>
 <svg class="a" style="left:1577px;top:865px" width="132" height="28" viewBox="0 0 132 28">
  <g fill="none">
   <path d="M15 7 H29.5 M15 21.5 H29.5 M15 7 V21.5 M29.5 7 V21.5" stroke="#1e1e1e" stroke-width="1.4"/>
   <g fill="#fff" stroke="#1e1e1e" stroke-width="1.2"><rect x="13.3" y="5.3" width="3.4" height="3.4"/><rect x="27.8" y="5.3" width="3.4" height="3.4"/><rect x="13.3" y="19.8" width="3.4" height="3.4"/><rect x="27.8" y="19.8" width="3.4" height="3.4"/></g>
   <path d="M58.5 7.5 H73 M58.5 21.5 H73 M58.5 7.5 V21.5 M73 7.5 V21.5" stroke="#6a6a6a" stroke-width="1.2"/>
   <path d="M61 11 H70.5 M61 18 H70.5" stroke="#d4d4d4" stroke-width="1"/>
   <g fill="#efefef" stroke="#6a6a6a" stroke-width="1.1"><rect x="56.8" y="5.8" width="3.2" height="3.2"/><rect x="71.3" y="5.8" width="3.2" height="3.2"/><rect x="56.8" y="19.8" width="3.2" height="3.2"/><rect x="71.3" y="19.8" width="3.2" height="3.2"/></g>
   <rect x="101.3" y="6.8" width="16" height="15" stroke="#5a5a5a" stroke-width="1.5"/>
   <g fill="#888"><rect x="102.2" y="7.7" width="2.4" height="2.4"/><rect x="114" y="7.7" width="2.4" height="2.4"/><rect x="102.2" y="18.9" width="2.4" height="2.4"/><rect x="114" y="18.9" width="2.4" height="2.4"/></g>
  </g>
 </svg>
 <div class="a" style="left:1718px;top:865px;width:51px;height:28px;border-radius:7px;background:#f0f0f0"></div>
 <div class="t" style="left:1724px;top:872px;font-size:15px;color:#222">1</div>
 <div class="t" style="left:1499px;top:901px;width:68px;text-align:center;font-size:13px;color:#2a2a2a">Color</div>
 <div class="t" style="left:1577px;top:901px;width:132px;text-align:center;font-size:13px;color:#2a2a2a">Inside</div>
 <div class="t" style="left:1712px;top:901px;width:64px;text-align:center;font-size:13px;color:#2a2a2a">Width</div>
 <div class="a" style="left:1472px;top:925px;width:297px;height:1px;background:#ececec"></div>
 <!-- ends / joins -->
 <div class="a" style="left:1501px;top:941px;width:122px;height:27px;border-radius:7px;background:#f4f4f4"></div>
 <div class="a" style="left:1502px;top:942px;width:37px;height:25px;border-radius:6px;background:#fff;box-shadow:0 1px 2px rgba(0,0,0,0.08)"></div>
 <div class="a" style="left:1581px;top:946px;width:1px;height:16px;background:#dadada"></div>
 <div class="a" style="left:1647px;top:941px;width:122px;height:27px;border-radius:7px;background:#efefef"></div>
 <div class="a" style="left:1648px;top:942px;width:38px;height:25px;border-radius:6px;background:#fff;box-shadow:0 1px 2px rgba(0,0,0,0.08)"></div>
 <div class="a" style="left:1727px;top:946px;width:1px;height:16px;background:#d4d4d4"></div>
 <svg class="a" style="left:1501px;top:941px" width="268" height="27" viewBox="0 0 268 27">
  <g fill="none" stroke-width="1.2">
   <path d="M26.5 6.3 H20 V20.7 H26.5" stroke="#8e8e8e" stroke-width="1.4"/>
   <path d="M20 13.5 H26.5" stroke="#b8b8b8"/>
   <path d="M22.5 9.8 H26.5 M22.5 17.2 H26.5" stroke="#d0d0d0" stroke-dasharray="1.5 1"/>
   <circle cx="19.5" cy="13.5" r="1.9" fill="#fff" stroke="#8e8e8e"/>
   <path d="M67 6.5 H59 Q52.5 6.5 52.5 13.5 Q52.5 20.5 59 20.5 H67" stroke="#c4c4c4" stroke-width="1.4"/>
   <path d="M59 13.5 H67" stroke="#c8c8c8"/><circle cx="58" cy="13.5" r="2" fill="#f2f2f2" stroke="#c4c4c4"/>
   <path d="M108 6.5 H93.5 V20.5 H108" stroke="#c4c4c4" stroke-width="1.4"/>
   <path d="M99 13.5 H108" stroke="#c8c8c8"/><circle cx="98" cy="13.5" r="2" fill="#f2f2f2" stroke="#c4c4c4"/>
  </g>
  <g fill="none">
   <rect x="160" y="8" width="13" height="13" fill="#d4d4d4"/>
   <path d="M158.8 21.5 V6.3 H173.5" stroke="#1e1e1e" stroke-width="1.7"/>
   <path d="M164.5 13 V21.5 M164.5 13 H173" stroke="#1e1e1e" stroke-width="1.4"/>
   <circle cx="164.5" cy="13" r="2" fill="#fff" stroke="#1e1e1e" stroke-width="1.3"/>
   <rect x="203" y="9" width="12" height="12" fill="#d8d8d8"/>
   <path d="M200 21.5 V14 Q200 6.5 207.5 6.5 H215" stroke="#777" stroke-width="1.7"/>
   <path d="M206 13 V21.5 M206 13 H214.5" stroke="#777" stroke-width="1.3"/>
   <circle cx="206" cy="13" r="2" fill="#fff" stroke="#777" stroke-width="1.2"/>
   <rect x="244" y="9" width="11" height="12" fill="#d8d8d8"/>
   <path d="M241 21.5 V15 L249.5 6.5 H256" stroke="#777" stroke-width="1.7"/>
   <path d="M247 13 V21.5 M247 13 H255.5" stroke="#777" stroke-width="1.3"/>
   <circle cx="247" cy="13" r="2" fill="#fff" stroke="#777" stroke-width="1.2"/>
  </g>
 </svg>
 <div class="t" style="left:1521px;top:975px;width:80px;text-align:center;font-size:13px;color:#2a2a2a">Ends</div>
 <div class="t" style="left:1668px;top:975px;width:80px;text-align:center;font-size:13px;color:#2a2a2a">Joins</div>
 <!-- scrollbar -->
 <div class="a" style="left:1772px;top:269px;width:9px;height:560px;border-radius:5px;background:#8a8a8a"></div>
 <!-- cursor -->
 <svg class="a" style="left:1456px;top:796px" width="24" height="30" viewBox="0 0 24 30">
  <path d="M4.5 2.5 L4.5 21 L8.8 17 L11.8 24.2 L14.8 23 L11.9 15.9 L17.8 15.9 Z" fill="#111" stroke="#fff" stroke-width="1.4" stroke-linejoin="round"/>
 </svg>
</div><div class="a" style="left:0;top:0;width:1653px;height:913px;border-radius:12px;box-shadow:inset 0 0 0 1px rgba(255,255,255,0.45);pointer-events:none"></div></div>
</body></html>
